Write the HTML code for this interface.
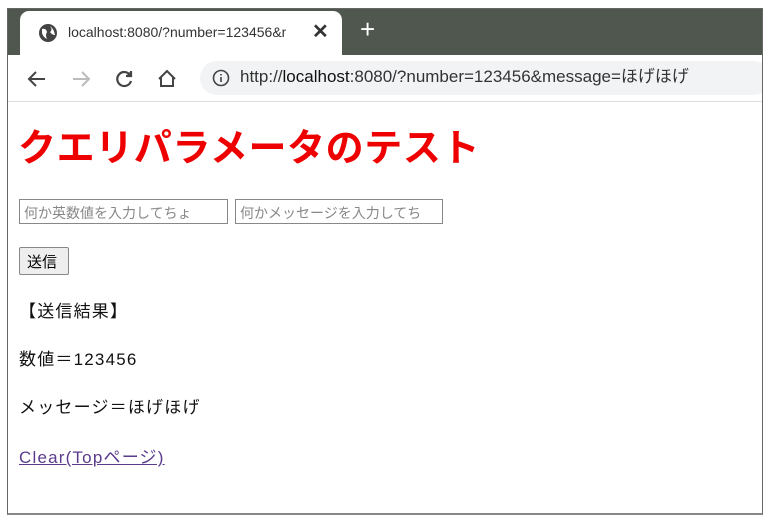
<!DOCTYPE html>
<html><head><meta charset="utf-8"><style>
*{margin:0;padding:0;box-sizing:border-box}
body{width:768px;height:525px;background:#fff;position:relative;overflow:hidden;font-family:"Liberation Sans","Noto Sans CJK JP",sans-serif}
.frame{position:absolute;left:7px;top:8px;width:756px;height:507px;border:1px solid #666;border-bottom:2px solid #888;overflow:hidden;background:#fff}
.tabbar{position:absolute;left:0;top:0;width:100%;height:46px;background:#50574f}
.tab{position:absolute;left:12px;top:2px;width:322px;height:44px;background:#fff;border-radius:9px 9px 0 0}
.tab .t{position:absolute;left:48px;top:13px;font-size:14px;color:#333;white-space:nowrap;width:218px;overflow:hidden}
.tab .x{position:absolute;left:292px;top:8px;font-size:20px;color:#333;font-weight:bold}
.plus{position:absolute;left:352px;top:5px;font-size:26px;color:#fff}
.tool{position:absolute;left:0;top:46px;width:100%;height:47px;background:#fff;border-bottom:1px solid #ddd}
.omni{position:absolute;left:192px;top:6px;width:570px;height:34px;background:#f1f3f4;border-radius:17px}
.omni .u{position:absolute;left:40px;top:0;line-height:32px;font-size:17px;color:#333;white-space:nowrap}
h1{position:absolute;left:10px;top:108px;font-size:38px;color:#e00;font-weight:bold;white-space:nowrap;letter-spacing:0.6px}
.in{position:absolute;top:190px;height:25px;border:1px solid #888;font-size:14px;color:#888;padding:3px 4px;white-space:nowrap;overflow:hidden}
.btn{position:absolute;left:11px;top:238px;width:50px;height:28px;border:1px solid #888;border-radius:2px;background:#eee;font-size:15px;padding:3px 7px}
.p{position:absolute;left:11px;font-size:17px;color:#111;white-space:nowrap;letter-spacing:1.2px}
a{color:#5a3b8c;text-decoration:underline}
</style></head><body>
<div class="frame">
<div class="tabbar">
<div class="tab">
<svg style="position:absolute;left:18px;top:12px" width="20" height="20" viewBox="0 0 20 20"><circle cx="10" cy="10" r="9" fill="#444"/><path d="M4 6 Q8 5 9 9 Q7 12 9 16 Q5 14 4 10Z M12 3 Q15 7 12 9 Q14 12 17 12 Q16 6 12 3Z" fill="#fff"/></svg>
<div class="t">localhost:8080/?number=123456&amp;m</div>
<div class="x">✕</div>
</div>
<div class="plus">+</div>
</div>
<div class="tool">
<svg style="position:absolute;left:18px;top:13px" width="22" height="22" viewBox="0 0 22 22" fill="none" stroke="#444" stroke-width="2"><path d="M19 11H4M10 4l-7 7 7 7"/></svg>
<svg style="position:absolute;left:62px;top:13px" width="22" height="22" viewBox="0 0 22 22" fill="none" stroke="#bbb" stroke-width="2"><path d="M3 11h15M12 4l7 7-7 7"/></svg>
<svg style="position:absolute;left:105px;top:13px" width="22" height="22" viewBox="0 0 22 22" fill="none" stroke="#444" stroke-width="2.2"><path d="M17 7A7 7 0 1 0 18 13"/><path d="M18 3v5h-5" fill="#444"/></svg>
<svg style="position:absolute;left:148px;top:13px" width="22" height="22" viewBox="0 0 22 22" fill="none" stroke="#444" stroke-width="2"><path d="M3 11L11 3l8 8M5 9v9h12V9"/></svg>
<div class="omni">
<svg style="position:absolute;left:12px;top:8px" width="18" height="18" viewBox="0 0 18 18" fill="none" stroke="#444" stroke-width="1.6"><circle cx="9" cy="9" r="7.5"/><path d="M9 8v5M9 5v1.5"/></svg>
<div class="u">http://<span style="color:#111">localhost</span>:8080/?number=123456&amp;message=ほげほげ</div>
</div>
</div>
<h1>クエリパラメータのテスト</h1>
<div class="in" style="left:11px;width:209px">何か英数値を入力してちょ</div>
<div class="in" style="left:227px;width:208px">何かメッセージを入力してち</div>
<div class="btn">送信</div>
<div class="p" style="top:288px">【送信結果】</div>
<div class="p" style="top:336px">数値＝123456</div>
<div class="p" style="top:384px">メッセージ＝ほげほげ</div>
<div class="p" style="top:434px"><a>Clear(Topページ)</a></div>
</div>
</body></html>
